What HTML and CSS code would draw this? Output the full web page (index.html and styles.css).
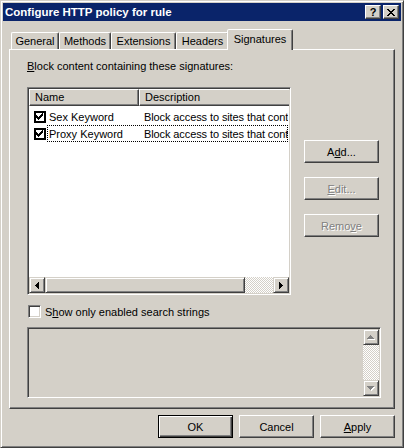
FILE: index.html
```html
<!DOCTYPE html>
<html>
<head>
<meta charset="utf-8">
<link rel="stylesheet" href="styles.css">
</head>
<body>
<div class="window">
  <div class="titlebar">
    <span class="title">Configure HTTP policy for rule</span>
    <div class="tb-btns">
      <span class="tb-btn help">?</span>
      <span class="tb-btn"><svg width="8" height="7" viewBox="0 0 8 7"><path d="M0 0h2v1h-2zM6 0h2v1h-2zM1 1h2v1h-2zM5 1h2v1h-2zM2 2h4v1h-4zM3 3h2v1h-2zM2 4h4v1h-4zM1 5h2v1h-2zM5 5h2v1h-2zM0 6h2v1h-2zM6 6h2v1h-2z" fill="#000"/></svg></span>
    </div>
  </div>
  <div class="client">
    <div class="tabs">
      <div class="tab t-general">General</div>
      <div class="tab t-methods">Methods</div>
      <div class="tab t-ext">Extensions</div>
      <div class="tab t-headers">Headers</div>
      <div class="tab sel">Signatures</div>
    </div>
    <div class="panel">
      <div class="label"><u>B</u>lock content containing these signatures:</div>
      <div class="mid">
        <div class="listview">
          <div class="lv-header">
            <div class="col c1">Name</div>
            <div class="col c2">Description</div>
          </div>
          <div class="lv-body">
            <div class="row">
              <div class="cb"><svg width="12" height="12" viewBox="0 0 12 12"><rect x="1" y="1" width="10" height="10" fill="#fff" stroke="#000" stroke-width="2"/><path d="M8 2h1v1h-1zM7 3h2v1h-2zM2 4h1v1h-1zM6 4h3v1h-3zM2 5h2v1h-2zM5 5h3v1h-3zM2 6h5v1h-5zM3 7h3v1h-3zM4 8h1v1h-1z" fill="#000"/></svg></div>
              <div class="rowtext">
                <span class="name">Sex Keyword</span>
                <span class="desc">Block access to sites that cont</span>
              </div>
            </div>
            <div class="row">
              <div class="cb"><svg width="12" height="12" viewBox="0 0 12 12"><rect x="1" y="1" width="10" height="10" fill="#fff" stroke="#000" stroke-width="2"/><path d="M8 2h1v1h-1zM7 3h2v1h-2zM2 4h1v1h-1zM6 4h3v1h-3zM2 5h2v1h-2zM5 5h3v1h-3zM2 6h5v1h-5zM3 7h3v1h-3zM4 8h1v1h-1z" fill="#000"/></svg></div>
              <div class="rowtext focus">
                <span class="name">Proxy Keyword</span>
                <span class="desc">Block access to sites that cont</span>
              </div>
            </div>
          </div>
          <div class="hscroll">
            <div class="sb-btn"><svg width="4" height="7" viewBox="0 0 4 7"><path d="M3 0h1v7h-1zM2 1h1v5h-1zM1 2h1v3h-1zM0 3h1v1h-1z" fill="#000"/></svg></div>
            <div class="thumb"></div>
            <div class="track"></div>
            <div class="sb-btn"><svg width="4" height="7" viewBox="0 0 4 7"><path d="M0 0h1v7h-1zM1 1h1v5h-1zM2 2h1v3h-1zM3 3h1v1h-1z" fill="#000"/></svg></div>
          </div>
        </div>
        <div class="side">
          <div class="btn">A<u>d</u>d...</div>
          <div class="btn disabled"><u>E</u>dit...</div>
          <div class="btn disabled">Remo<u>v</u>e</div>
        </div>
      </div>
      <div class="chkrow">
        <span class="box"></span>
        <span class="chklabel">S<u>h</u>ow only enabled search strings</span>
      </div>
      <div class="memo">
        <div class="vscroll">
          <div class="sb-btn"><svg width="8" height="5" viewBox="0 0 8 5"><path d="M4 1h1v1h-1zM3 2h3v1h-3zM2 3h5v1h-5zM1 4h7v1h-7z" fill="#fff"/><path d="M3 0h1v1h-1zM2 1h3v1h-3zM1 2h5v1h-5zM0 3h7v1h-7z" fill="#808080"/></svg></div>
          <div class="track"></div>
          <div class="sb-btn"><svg width="8" height="5" viewBox="0 0 8 5"><path d="M1 1h7v1h-7zM2 2h5v1h-5zM3 3h3v1h-3zM4 4h1v1h-1z" fill="#fff"/><path d="M0 0h7v1h-7zM1 1h5v1h-5zM2 2h3v1h-3zM3 3h1v1h-1z" fill="#808080"/></svg></div>
        </div>
      </div>
    </div>
    <div class="footer">
      <div class="btn default">OK</div>
      <div class="btn">Cancel</div>
      <div class="btn"><u>A</u>pply</div>
    </div>
  </div>
</div>
</body>
</html>
```
FILE: styles.css
```css
* { box-sizing: border-box; }
html, body { margin: 0; padding: 0; }
body {
  font-family: "Liberation Sans", Arial, sans-serif;
  font-size: 11px;
  color: #000;
  background: #d4d0c8;
}
.window {
  width: 404px;
  height: 448px;
  background: #d4d0c8;
  border: 1px solid;
  border-color: #d4d0c8 #404040 #404040 #d4d0c8;
  padding: 2px;
  box-shadow: inset 1px 1px 0 #fff, inset -1px -1px 0 #808080;
  display: flex;
  flex-direction: column;
}
.titlebar {
  height: 18px;
  background: #0a246a;
  display: flex;
  align-items: center;
  justify-content: space-between;
  padding: 0 2px 0 2px;
}
.title {
  color: #fff;
  font-weight: bold;
  font-size: 11.5px;
}
.tb-btns { display: flex; gap: 2px; }
.tb-btn {
  width: 16px;
  height: 14px;
  background: #d4d0c8;
  border: 1px solid;
  border-color: #fff #404040 #404040 #fff;
  box-shadow: inset -1px -1px 0 #808080;
  display: flex;
  align-items: center;
  justify-content: center;
}
.tb-btn.help { font-weight: bold; font-size: 11px; line-height: 12px; }
.client {
  flex: 1;
  display: flex;
  flex-direction: column;
  padding: 8px 6px 0 6px;
}
.tabs {
  height: 20px;
  display: flex;
  align-items: flex-end;
  padding-left: 2px;
}
.tab {
  height: 17px;
  border: 1px solid;
  border-bottom: none;
  border-color: #fff #404040 transparent #fff;
  border-radius: 2px 2px 0 0;
  box-shadow: inset -1px 0 0 #808080;
  text-align: center;
  padding-top: 1px;
  line-height: 14px;
  white-space: nowrap;
}
.t-general { width: 48px; }
.t-methods { width: 52px; }
.t-ext { width: 65px; }
.t-headers { width: 53px; }
.tab.sel {
  width: 66px;
  height: 21px;
  margin: 0 -2px -1px -2px;
  background: #d4d0c8;
  z-index: 1;
  padding-top: 2px;
}
.panel {
  flex: 1;
  border: 1px solid;
  border-color: #fff #404040 #404040 #fff;
  box-shadow: inset -1px -1px 0 #808080;
  padding: 10px 0 0 17px;
  display: flex;
  flex-direction: column;
}
.label { height: 13px; line-height: 13px; }
.mid { display: flex; margin-top: 14px; }
.listview {
  width: 264px;
  height: 208px;
  background: #fff;
  border: 1px solid;
  border-color: #808080 #fff #fff #808080;
  box-shadow: inset 1px 1px 0 #404040, inset -1px -1px 0 #d4d0c8;
  padding: 1px;
  display: flex;
  flex-direction: column;
}
.lv-header {
  height: 17px;
  display: flex;
  overflow: hidden;
  background: #d4d0c8;
  flex: none;
}
.col {
  height: 17px;
  border: 1px solid;
  border-color: #fff #404040 #404040 #fff;
  box-shadow: inset -1px -1px 0 #808080;
  padding-left: 5px;
  line-height: 14px;
  flex: none;
  white-space: nowrap;
}
.c1 { width: 110px; }
.c2 { width: 200px; }
.lv-body {
  flex: 1;
  overflow: hidden;
  padding-top: 2px;
}
.row {
  height: 17px;
  display: flex;
  align-items: center;
}
.cb {
  width: 18px;
  flex: none;
  padding-left: 5px;
  display: flex;
  align-items: center;
}
.rowtext {
  flex: 1;
  height: 17px;
  display: flex;
  align-items: center;
  white-space: nowrap;
  overflow: hidden;
  margin-right: 1px;
}
.rowtext.focus { outline: 1px dotted #000; outline-offset: -1px; }
.name { width: 92px; flex: none; padding-left: 2px; }
.desc { padding-left: 5px; letter-spacing: -0.1px; }
.hscroll {
  height: 16px;
  display: flex;
  flex: none;
}
.sb-btn {
  width: 16px;
  height: 16px;
  flex: none;
  background: #d4d0c8;
  border: 1px solid;
  border-color: #d4d0c8 #404040 #404040 #d4d0c8;
  box-shadow: inset 1px 1px 0 #fff, inset -1px -1px 0 #808080;
  display: flex;
  align-items: center;
  justify-content: center;
}
.thumb {
  width: 200px;
  height: 16px;
  background: #d4d0c8;
  border: 1px solid;
  border-color: #d4d0c8 #404040 #404040 #d4d0c8;
  box-shadow: inset 1px 1px 0 #fff, inset -1px -1px 0 #808080;
}
.track {
  flex: 1;
  background-color: #d4d0c8;
  background-image: repeating-conic-gradient(#fff 0 25%, #d4d0c8 0 50%);
  background-size: 2px 2px;
}
.side {
  display: flex;
  flex-direction: column;
  gap: 14px;
  margin-left: 13px;
  padding-top: 53px;
}
.btn {
  width: 75px;
  height: 23px;
  background: #d4d0c8;
  border: 1px solid;
  border-color: #fff #404040 #404040 #fff;
  box-shadow: inset -1px -1px 0 #808080;
  display: flex;
  align-items: center;
  justify-content: center;
  white-space: nowrap;
}
.btn.disabled { color: #808080; text-shadow: 1px 1px 0 #fff; }
.btn.default {
  border-color: #000;
  box-shadow: inset 1px 1px 0 #fff, inset -1px -1px 0 #404040, inset -2px -2px 0 #808080;
}
.chkrow {
  display: flex;
  align-items: center;
  margin-top: 10px;
  height: 13px;
}
.box {
  width: 13px;
  height: 13px;
  margin-left: 1px;
  background: #fff;
  border: 1px solid;
  border-color: #808080 #fff #fff #808080;
  box-shadow: inset 1px 1px 0 #404040, inset -1px -1px 0 #d4d0c8;
}
.chklabel { margin-left: 4px; }
.memo {
  width: 354px;
  height: 71px;
  margin-top: 9px;
  background: #d4d0c8;
  border: 1px solid;
  border-color: #808080 #fff #fff #808080;
  box-shadow: inset 1px 1px 0 #404040, inset -1px -1px 0 #d4d0c8;
  padding: 1px;
  display: flex;
  justify-content: flex-end;
}
.vscroll {
  width: 16px;
  display: flex;
  flex-direction: column;
}
.footer {
  display: flex;
  justify-content: flex-end;
  gap: 6px;
  padding: 6px 0 7px;
}
```
